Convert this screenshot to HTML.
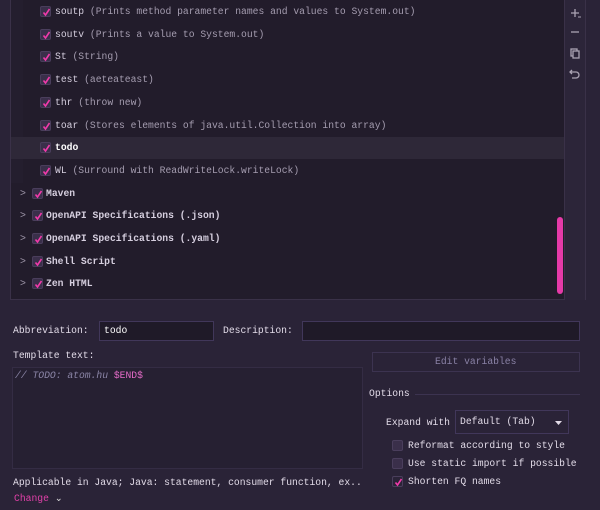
<!DOCTYPE html>
<html><head><style>
body{margin:0;width:600px;height:510px;background:#2a2337;font-family:"Liberation Mono",monospace;font-size:9.7px;color:#d6cfdf;position:relative;overflow:hidden}
.abs{position:absolute}
#list{left:10px;top:-1px;width:555px;height:301px;background:#221c2b;border:1px solid #3a3148;box-sizing:border-box}
#tb{left:565px;top:0;width:20px;height:300px;background:#2c2539;border-right:1px solid #3a3148}
.row{position:absolute;left:0;width:553px;height:22px;line-height:22px}
.sel{background:#2e2838}
.cb{position:absolute;top:5px;width:11px;height:11px;background:#3a2f4a;border:1px solid #4a3e5c;box-sizing:border-box;border-radius:2px}
.cb svg{position:absolute;left:1px;top:1px}
.t{position:absolute;top:0;white-space:pre}
.d{color:#a59db0}
.arr{position:absolute;left:9px;top:0;color:#9d95a8;font-family:"Liberation Sans",sans-serif;font-size:10px}
.lbl{position:absolute;white-space:pre;color:#e2dbe8}
.inp{position:absolute;background:#1f1a28;border:1px solid #41375a;box-sizing:border-box}
</style></head><body>
<div id="list" class="abs">
<div class="abs" style="left:0;top:0;width:12px;height:183px;background:#241e2e"></div>
</div>
<div id="tb" class="abs">
<svg width="20" height="90" style="position:absolute;left:0;top:0" stroke="#aaa3b3" fill="none" stroke-width="1.3">
<path d="M6 13h8M10 9v8"/><path d="M13 17h3" stroke-width="1"/>
<path d="M6 32h8"/>
<rect x="6" y="49" width="6" height="7"/><rect x="8" y="51" width="6" height="7" fill="#2c2539"/>
<path d="M7 70l-2 2 2 2M5 72h6a3 3 0 0 1 0 6h-4"/>
</svg>
</div>
<div class="abs" style="left:557px;top:217px;width:6px;height:77px;background:#e53aa8;border-radius:3px"></div>

<div id="rows">
<div class="row" style="top:1px;left:11px"><div class="cb" style="left:29px"><svg width="9" height="9"><path d="M1.5 4.5l2 2.5 4-6" stroke="#f03aaa" stroke-width="1.6" fill="none"/></svg></div><div class="t" style="left:44px">soutp <span class="d">(Prints method parameter names and values to System.out)</span></div></div>
<div class="row" style="top:24px;left:11px"><div class="cb" style="left:29px"><svg width="9" height="9"><path d="M1.5 4.5l2 2.5 4-6" stroke="#f03aaa" stroke-width="1.6" fill="none"/></svg></div><div class="t" style="left:44px">soutv <span class="d">(Prints a value to System.out)</span></div></div>
<div class="row" style="top:46px;left:11px"><div class="cb" style="left:29px"><svg width="9" height="9"><path d="M1.5 4.5l2 2.5 4-6" stroke="#f03aaa" stroke-width="1.6" fill="none"/></svg></div><div class="t" style="left:44px">St <span class="d">(String)</span></div></div>
<div class="row" style="top:69px;left:11px"><div class="cb" style="left:29px"><svg width="9" height="9"><path d="M1.5 4.5l2 2.5 4-6" stroke="#f03aaa" stroke-width="1.6" fill="none"/></svg></div><div class="t" style="left:44px">test <span class="d">(aeteateast)</span></div></div>
<div class="row" style="top:92px;left:11px"><div class="cb" style="left:29px"><svg width="9" height="9"><path d="M1.5 4.5l2 2.5 4-6" stroke="#f03aaa" stroke-width="1.6" fill="none"/></svg></div><div class="t" style="left:44px">thr <span class="d">(throw new)</span></div></div>
<div class="row" style="top:115px;left:11px"><div class="cb" style="left:29px"><svg width="9" height="9"><path d="M1.5 4.5l2 2.5 4-6" stroke="#f03aaa" stroke-width="1.6" fill="none"/></svg></div><div class="t" style="left:44px">toar <span class="d">(Stores elements of java.util.Collection into array)</span></div></div>
<div class="row sel" style="top:137px;left:11px"><div class="cb" style="left:29px"><svg width="9" height="9"><path d="M1.5 4.5l2 2.5 4-6" stroke="#f03aaa" stroke-width="1.6" fill="none"/></svg></div><div class="t" style="left:44px;color:#fff;font-weight:bold">todo</div></div>
<div class="row" style="top:160px;left:11px"><div class="cb" style="left:29px"><svg width="9" height="9"><path d="M1.5 4.5l2 2.5 4-6" stroke="#f03aaa" stroke-width="1.6" fill="none"/></svg></div><div class="t" style="left:44px">WL <span class="d">(Surround with ReadWriteLock.writeLock)</span></div></div>
<div class="row" style="top:183px;left:11px"><div class="arr">&gt;</div><div class="cb" style="left:21px"><svg width="9" height="9"><path d="M1.5 4.5l2 2.5 4-6" stroke="#f03aaa" stroke-width="1.6" fill="none"/></svg></div><div class="t" style="left:35px;font-weight:bold">Maven</div></div>
<div class="row" style="top:205px;left:11px"><div class="arr">&gt;</div><div class="cb" style="left:21px"><svg width="9" height="9"><path d="M1.5 4.5l2 2.5 4-6" stroke="#f03aaa" stroke-width="1.6" fill="none"/></svg></div><div class="t" style="left:35px;font-weight:bold">OpenAPI Specifications (.json)</div></div>
<div class="row" style="top:228px;left:11px"><div class="arr">&gt;</div><div class="cb" style="left:21px"><svg width="9" height="9"><path d="M1.5 4.5l2 2.5 4-6" stroke="#f03aaa" stroke-width="1.6" fill="none"/></svg></div><div class="t" style="left:35px;font-weight:bold">OpenAPI Specifications (.yaml)</div></div>
<div class="row" style="top:251px;left:11px"><div class="arr">&gt;</div><div class="cb" style="left:21px"><svg width="9" height="9"><path d="M1.5 4.5l2 2.5 4-6" stroke="#f03aaa" stroke-width="1.6" fill="none"/></svg></div><div class="t" style="left:35px;font-weight:bold">Shell Script</div></div>
<div class="row" style="top:273px;left:11px"><div class="arr">&gt;</div><div class="cb" style="left:21px"><svg width="9" height="9"><path d="M1.5 4.5l2 2.5 4-6" stroke="#f03aaa" stroke-width="1.6" fill="none"/></svg></div><div class="t" style="left:35px;font-weight:bold">Zen HTML</div></div>
</div>

<div class="lbl" style="left:13px;top:325px">Abbreviation:</div>
<div class="inp" style="left:99px;top:321px;width:115px;height:20px"><span class="lbl" style="left:4px;top:3px;color:#fff">todo</span></div>
<div class="lbl" style="left:223px;top:325px">Description:</div>
<div class="inp" style="left:302px;top:321px;width:278px;height:20px"></div>
<div class="lbl" style="left:13px;top:350px">Template text:</div>
<div class="inp" style="left:12px;top:367px;width:351px;height:102px;background:#262032;border-color:#342c44"><span class="lbl" style="left:2px;top:2px;color:#8c86a8;font-style:italic">// TODO: atom.hu <span style="color:#e56cc8;font-style:normal">$END$</span></span></div>
<div class="inp" style="left:372px;top:352px;width:208px;height:20px;background:#2a2337;border-color:#3c3350"><span class="lbl" style="left:62px;top:3px;color:#8a82a6">Edit variables</span></div>
<div class="lbl" style="left:369px;top:388px">Options</div>
<div class="abs" style="left:415px;top:394px;width:165px;height:1px;background:#3c3350"></div>
<div class="lbl" style="left:386px;top:417px">Expand with</div>
<div class="inp" style="left:455px;top:410px;width:114px;height:24px;background:#2a2337;border-color:#41375a"><span class="lbl" style="left:4px;top:5px">Default (Tab)</span><svg class="abs" style="left:99px;top:9px" width="8" height="6"><path d="M0 1h7l-3.5 4z" fill="#e2dbe8"/></svg></div>
<div class="cb" style="left:392px;top:440px"></div><div class="lbl" style="left:408px;top:440px">Reformat according to style</div>
<div class="cb" style="left:392px;top:458px"></div><div class="lbl" style="left:408px;top:458px">Use static import if possible</div>
<div class="cb" style="left:392px;top:476px;background:none"><svg width="9" height="9"><path d="M1.5 4.5l2 2.5 4-6" stroke="#f03aaa" stroke-width="1.6" fill="none"/></svg></div><div class="lbl" style="left:408px;top:476px">Shorten FQ names</div>
<div class="lbl" style="left:13px;top:477px">Applicable in Java; Java: statement, consumer function, ex..</div>
<div class="lbl" style="left:14px;top:493px;color:#e040a8">Change <span style="color:#ddd;font-family:'Liberation Sans',sans-serif">⌄</span></div>
</body></html>
